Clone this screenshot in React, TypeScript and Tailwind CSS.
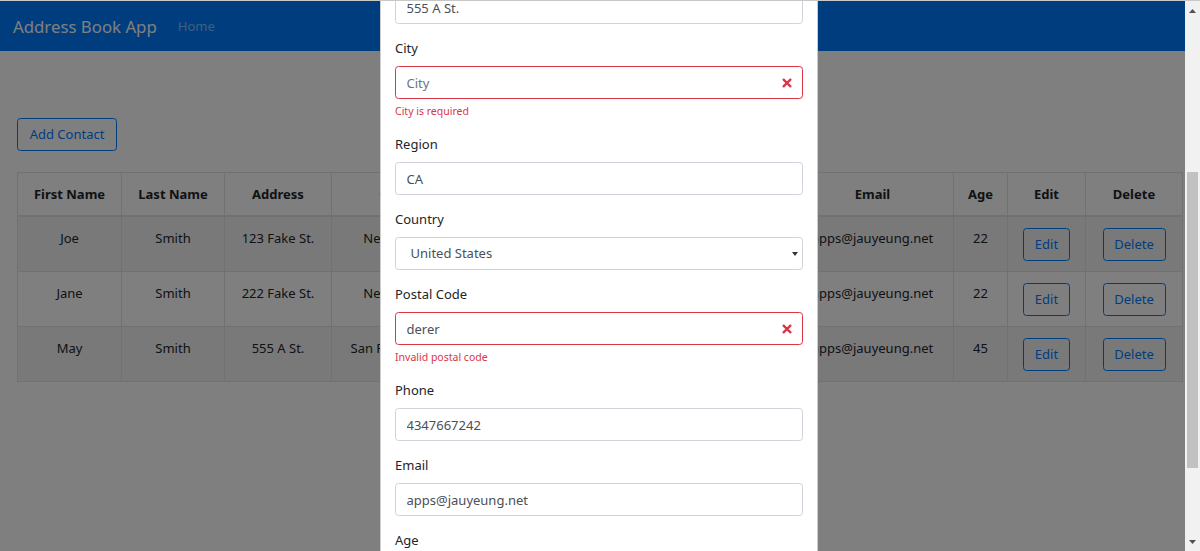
import { useState } from "react"

type Contact = {
  firstName: string
  lastName: string
  address: string
  city: string
  region: string
  country: string
  postalCode: string
  phone: string
  email: string
  age: number
}

const contacts: Contact[] = [
  {
    firstName: "Joe",
    lastName: "Smith",
    address: "123 Fake St.",
    city: "New York",
    region: "NY",
    country: "United States",
    postalCode: "10001",
    phone: "4347667242",
    email: "apps@jauyeung.net",
    age: 22,
  },
  {
    firstName: "Jane",
    lastName: "Smith",
    address: "222 Fake St.",
    city: "New York",
    region: "NY",
    country: "United States",
    postalCode: "10001",
    phone: "4347667242",
    email: "apps@jauyeung.net",
    age: 22,
  },
  {
    firstName: "May",
    lastName: "Smith",
    address: "555 A St.",
    city: "San Francisco",
    region: "CA",
    country: "United States",
    postalCode: "94105",
    phone: "4347667242",
    email: "apps@jauyeung.net",
    age: 45,
  },
]

const columns = [
  { title: "First Name", width: "w-[104px]" },
  { title: "Last Name", width: "w-[103px]" },
  { title: "Address", width: "w-[107px]" },
  { title: "City", width: "w-[121px]" },
  { title: "Region", width: "w-[68px]" },
  { title: "Country", width: "w-[100px]" },
  { title: "Postal Code", width: "w-[80px]" },
  { title: "Phone", width: "w-[91px]" },
  { title: "Email", width: "w-[162px]" },
  { title: "Age", width: "w-[54px]" },
  { title: "Edit", width: "w-[78px]" },
  { title: "Delete", width: "w-[97px]" },
]

function InvalidIcon() {
  return (
    <svg
      viewBox="-2 -2 7 7"
      className="pointer-events-none absolute right-[8px] top-1/2 h-[16px] w-[16px] -translate-y-1/2"
      fill="#dc3545"
    >
      <path stroke="#dc3545" d="M0 0l3 3m0-3L0 3" />
      <circle r=".5" />
      <circle cx="3" r=".5" />
      <circle cy="3" r=".5" />
      <circle cx="3" cy="3" r=".5" />
    </svg>
  )
}

function Field({
  label,
  value,
  placeholder,
  error,
}: {
  label: string
  value: string
  placeholder?: string
  error?: string
}) {
  const [text, setText] = useState(value)
  return (
    <div className="mb-[14px]">
      <label className="mb-[7px] block">{label}</label>
      <div className="relative">
        <input
          value={text}
          placeholder={placeholder}
          onChange={(e) => setText(e.target.value)}
          className={
            error
              ? "block h-[33px] w-full rounded-[3.5px] border border-[#dc3545] bg-white pl-[10.5px] pr-[30px] text-[13px] text-[#495057] outline-none placeholder:text-[#6c757d]"
              : "block h-[33px] w-full rounded-[3.5px] border border-[#ced4da] bg-white px-[10.5px] text-[13px] text-[#495057] outline-none placeholder:text-[#6c757d]"
          }
        />
        {error && <InvalidIcon />}
      </div>
      {error && <div className="mt-[4px] text-[10.5px] leading-[17px] text-[#dc3545]">{error}</div>}
    </div>
  )
}

export default function App() {
  const [country, setCountry] = useState("United States")

  return (
    <div className="relative h-[551px] overflow-hidden border-t border-[#c8c8c8] bg-white font-['Noto_Sans',sans-serif] text-[13px] leading-[21px] text-[#212529]">
      {/* page behind the modal */}
      <div className="pr-[15px]">
        <nav className="flex h-[50px] items-center bg-[#007bff] px-[13px]">
          <span className="mr-[14px] text-[16.8px] text-white">Address Book App</span>
          <a className="px-[7px] text-white/50">Home</a>
        </nav>

        <div className="pl-[17px] pt-[67px]">
          <button className="h-[33px] w-[100px] rounded-[3.5px] border border-[#007bff] text-[13px] text-[#007bff]">
            Add Contact
          </button>

          <table className="mt-[21px] w-[1165px] table-fixed border-collapse">
            <thead>
              <tr>
                {columns.map((c) => (
                  <th
                    key={c.title}
                    className={`${c.width} overflow-hidden whitespace-nowrap border border-b-2 border-[#dee2e6] px-[10.5px] pb-[10px] pt-[11px] text-center font-bold`}
                  >
                    {c.title}
                  </th>
                ))}
              </tr>
            </thead>
            <tbody>
              {contacts.map((c, i) => (
                <tr key={c.firstName} className={i % 2 === 0 ? "bg-black/5" : ""}>
                  {[c.firstName, c.lastName, c.address, c.city, c.region, c.country, c.postalCode, c.phone, c.email, c.age].map(
                    (v, j) => (
                      <td
                        key={j}
                        className="overflow-hidden whitespace-nowrap border border-[#dee2e6] px-[10.5px] pb-[10px] pt-[11px] text-center align-top"
                      >
                        {v}
                      </td>
                    ),
                  )}
                  <td className="border border-[#dee2e6] pb-[10px] pt-[11px] align-top">
                    <div className="flex justify-center">
                      <button className="h-[33px] w-[47px] rounded-[3.5px] border border-[#007bff] text-[#007bff]">Edit</button>
                    </div>
                  </td>
                  <td className="border border-[#dee2e6] pb-[10px] pt-[11px] align-top">
                    <div className="flex justify-center">
                      <button className="h-[33px] w-[63px] rounded-[3.5px] border border-[#007bff] text-[#007bff]">
                        Delete
                      </button>
                    </div>
                  </td>
                </tr>
              ))}
            </tbody>
          </table>
        </div>
      </div>

      {/* modal */}
      <div className="absolute inset-0 bg-black/50">
        <div className="ml-[380px] mt-[-11px] w-[438px] border border-black/20 bg-white px-[14px] pb-[14px]">
          <div className="mb-[14px]">
            <input
              defaultValue="555 A St."
              className="block h-[33px] w-full rounded-[3.5px] border border-[#ced4da] px-[10.5px] text-[13px] text-[#495057] outline-none"
            />
          </div>
          <Field label="City" value="" placeholder="City" error="City is required" />
          <Field label="Region" value="CA" placeholder="Region" />
          <div className="mb-[14px]">
            <label className="mb-[7px] block">Country</label>
            <div className="relative">
              <select
                value={country}
                onChange={(e) => setCountry(e.target.value)}
                className="block h-[33px] w-full appearance-none rounded-[3.5px] border border-[#ced4da] bg-white pl-[14.5px] text-[13px] text-[#495057] outline-none"
              >
                <option>United States</option>
                <option>Canada</option>
                <option>United Kingdom</option>
              </select>
              <svg viewBox="0 0 6 4" className="pointer-events-none absolute right-[5px] top-1/2 h-[4px] w-[6px] -translate-y-1/2">
                <path d="M0 0h6L3 4z" fill="#333" />
              </svg>
            </div>
          </div>
          <Field label="Postal Code" value="derer" placeholder="Postal Code" error="Invalid postal code" />
          <Field label="Phone" value="4347667242" placeholder="Phone" />
          <Field label="Email" value="apps@jauyeung.net" placeholder="Email" />
          <Field label="Age" value="45" placeholder="Age" />
        </div>

        {/* modal scrollbar */}
        <div className="absolute bottom-0 right-0 top-0 w-[15px] bg-[#f1f1f1]">
          <svg viewBox="0 0 7 4" className="absolute left-[4px] top-[8px] h-[4px] w-[7px]">
            <path d="M3.5 0L7 4H0z" fill="#505050" />
          </svg>
          <div className="absolute left-[2px] right-[2px] top-[171px] h-[296px] bg-[#c1c1c1]" />
          <svg viewBox="0 0 7 4" className="absolute bottom-[7px] left-[4px] h-[4px] w-[7px]">
            <path d="M0 0h7L3.5 4z" fill="#505050" />
          </svg>
        </div>
      </div>
    </div>
  )
}
